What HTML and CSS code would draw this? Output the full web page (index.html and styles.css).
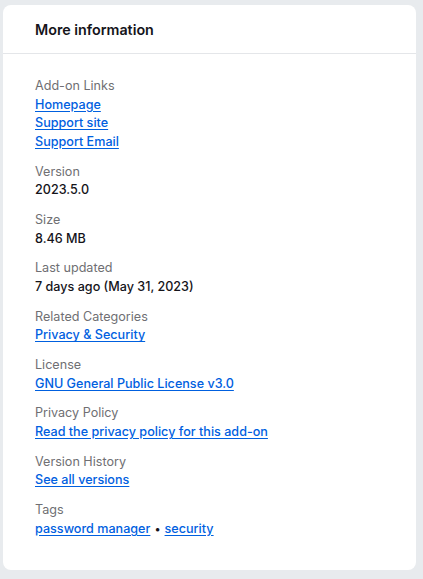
FILE: index.html
```html
<!DOCTYPE html>
<html lang="en">
<head>
<meta charset="utf-8">
<title>More information</title>
<link rel="stylesheet" href="styles.css">
</head>
<body>
<section class="card">
  <header class="card-header">
    <h2 class="card-title">More information</h2>
  </header>
  <dl class="info">
    <dt>Add-on Links</dt>
    <dd>
      <ul class="links">
        <li><a href="#">Homepage</a></li>
        <li><a href="#">Support site</a></li>
        <li><a href="#">Support Email</a></li>
      </ul>
    </dd>
    <dt>Version</dt>
    <dd class="strong">2023.5.0</dd>
    <dt>Size</dt>
    <dd class="strong">8.46 MB</dd>
    <dt>Last updated</dt>
    <dd class="strong">7 days ago (May 31, 2023)</dd>
    <dt>Related Categories</dt>
    <dd><a href="#">Privacy &amp; Security</a></dd>
    <dt>License</dt>
    <dd><a href="#">GNU General Public License v3.0</a></dd>
    <dt>Privacy Policy</dt>
    <dd><a href="#">Read the privacy policy for this add-on</a></dd>
    <dt>Version History</dt>
    <dd><a href="#">See all versions</a></dd>
    <dt>Tags</dt>
    <dd class="tags"><a href="#">password manager</a><span class="sep">•</span><a href="#">security</a></dd>
  </dl>
</section>
</body>
</html>
```
FILE: styles.css
```css
html, body {
  margin: 0;
  padding: 0;
}
body {
  background: #e8ebee;
  font-family: Inter, "Noto Sans", sans-serif;
  color: #15141a;
  padding: 5px 7px 9px 3px;
}
.card {
  background: #ffffff;
  border-radius: 8px;
  height: 565px;
  box-sizing: border-box;
}
.card-header {
  height: 49px;
  box-sizing: border-box;
  border-bottom: 1px solid #e4e6e9;
  padding: 2px 32px 0;
  display: flex;
  align-items: center;
}
.card-title {
  margin: 0;
  font-size: 14.3px;
  font-weight: 600;
  line-height: 20px;
}
.info {
  margin: 0;
  padding: 23px 32px 0;
  font-size: 12.6px;
  line-height: 18.6px;
}
.info dt {
  color: #6f6f73;
  font-weight: 400;
}
.info dd {
  margin: 0 0 11.2px;
}
.info dd.strong {
  font-weight: 500;
}
.links {
  list-style: none;
  margin: 0;
  padding: 0;
}
.info a {
  color: #0060df;
  font-weight: 500;
  text-decoration: underline;
  text-underline-offset: 2px;
}
.sep {
  margin: 0 4px;
  font-size: 11px;
  color: #15141a;
}
```
